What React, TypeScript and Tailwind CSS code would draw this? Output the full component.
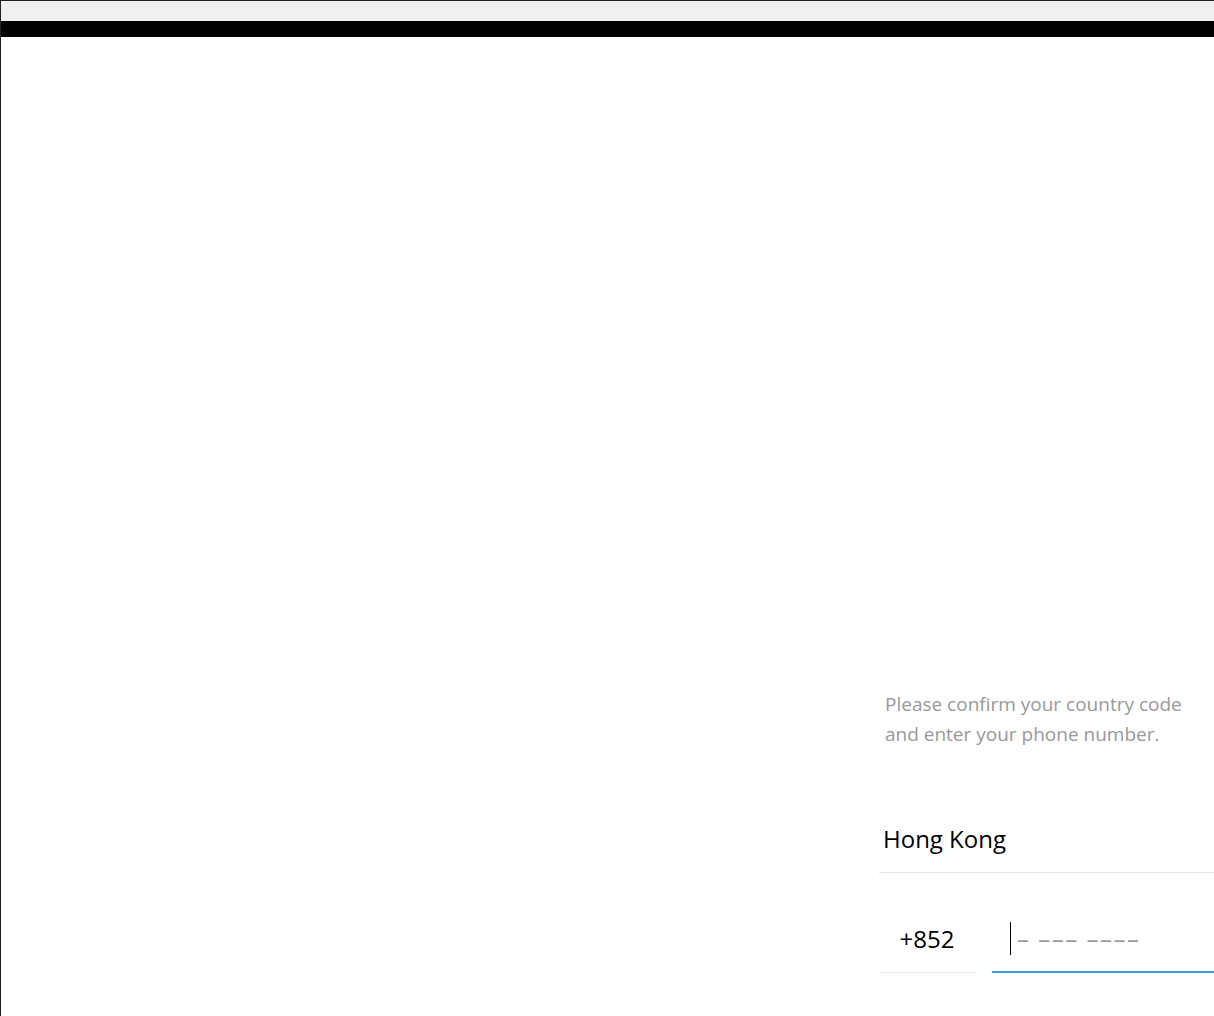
export default function App() {
  return (
    <div className="h-[1016px] w-full overflow-hidden border-l border-t border-[#1f1f1f] bg-white font-['Open_Sans',sans-serif]">
      <div className="h-5 bg-[#f0f0f0]" />
      <div className="h-4 bg-black" />

      <div className="flex pl-[878px] pt-[652px]">
        <div className="w-[420px] shrink-0">
          <p className="pl-[6px] text-[19px] leading-[30px] text-[#999999]">
            Please confirm your country code
            <br />
            and enter your phone number.
          </p>

          <div className="mt-[74px] border-b border-[#e4e4e4] pb-[17px] pl-[4px] text-[24px] leading-[32px] text-black">
            Hong Kong
          </div>

          <div className="mt-[49px] flex items-end gap-[17px]">
            <div className="w-[96px] border-b border-[#e4e4e4] pb-[17px] text-center text-[24px] leading-[32px] text-black">
              +852
            </div>
            <div className="flex flex-1 items-center border-b-2 border-[#37a0de] pb-[16px] pl-[18px] text-[24px] leading-[32px]">
              <span className="h-[33px] w-px bg-black" />
              <span className="ml-[6px] tracking-[1.5px] text-[#9a9a9a]">– ––– ––––</span>
            </div>
          </div>
        </div>
      </div>
    </div>
  );
}
